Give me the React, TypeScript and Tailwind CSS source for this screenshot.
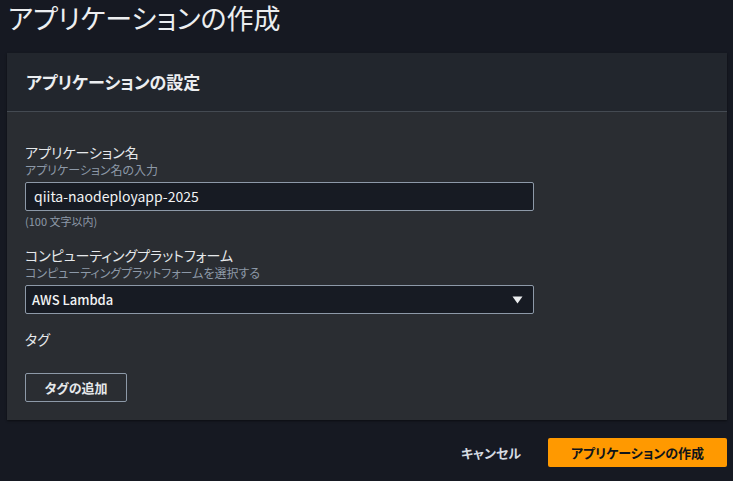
import React from 'react'

const font = "font-['Noto_Sans_CJK_JP','Noto_Sans',sans-serif] [font-feature-settings:'palt']"

function Field({ label, sub, children }: { label: string; sub?: string; children: React.ReactNode }) {
    return (
        <div className='flex flex-col'>
            <div className='text-[14px] leading-[20px] text-[#e5e8eb]'>{label}</div>
            {sub && <div className='text-[12px] leading-[16px] text-[#8d99a8]'>{sub}</div>}
            {children}
        </div>
    )
}

export default function App() {
    return (
        <div className={`min-h-screen bg-[#161922] pl-[7px] pr-[6px] ${font}`}>
            {/* Page title */}
            <h1 className='pl-[1px] text-[27px] leading-[36px] text-[#eceef0]'>アプリケーションの作成</h1>

            {/* Settings card */}
            <div className='mt-[17px] bg-[#2a2d32] shadow-[0_1px_2px_rgba(0,0,0,0.5)]'>
                <div className='flex h-[59px] items-center border-b border-[#444a52] bg-[#22262d] px-[19px]'>
                    <h2 className='text-[17px] font-bold text-[#eceef0]'>アプリケーションの設定</h2>
                </div>

                <div className='flex flex-col px-[18px] pb-[18px] pt-[30px]'>
                    <Field label='アプリケーション名' sub='アプリケーション名の入力'>
                        <div className='mt-[4px] flex h-[29px] w-[509px] items-center rounded-[2px] border border-[#8d99a8] bg-[#171b23] px-[8px] text-[14px] text-[#f2f3f4]'>
                            qiita-naodeployapp-2025
                        </div>
                        <div className='mt-[2px] text-[11px] leading-[16px] text-[#8d99a8]'>(100 文字以内)</div>
                    </Field>

                    <div className='mt-[16px]'>
                        <Field label='コンピューティングプラットフォーム' sub='コンピューティングプラットフォームを選択する'>
                            <div className='mt-[4px] flex h-[29px] w-[509px] items-center justify-between rounded-[2px] border border-[#8d99a8] bg-[#171b23] pl-[6px] pr-[10px] text-[13px] font-medium text-[#f2f3f4]'>
                                <span>AWS Lambda</span>
                                <svg width='11' height='8' viewBox='0 0 11 8'>
                                    <path d='M0.5 0.5 H10.5 L5.5 7.5 Z' fill='#eceef0' />
                                </svg>
                            </div>
                        </Field>
                    </div>

                    <div className='mt-[15px]'>
                        <Field label='タグ'>
                            <button className='mt-[24px] flex h-[29px] w-[102px] items-center justify-center rounded-[2px] border border-[#8d99a8] text-[13px] font-bold text-[#e5e8eb]'>
                                タグの追加
                            </button>
                        </Field>
                    </div>
                </div>
            </div>

            {/* Footer actions */}
            <div className='mt-[18px] flex items-center justify-end gap-[27px]'>
                <button className='text-[13px] font-bold text-[#d5dbe2]'>キャンセル</button>
                <button className='flex h-[29px] w-[179px] items-center justify-center rounded-[2px] bg-[#ff9900] text-[13px] font-bold text-[#0f141a]'>
                    アプリケーションの作成
                </button>
            </div>
        </div>
    )
}
